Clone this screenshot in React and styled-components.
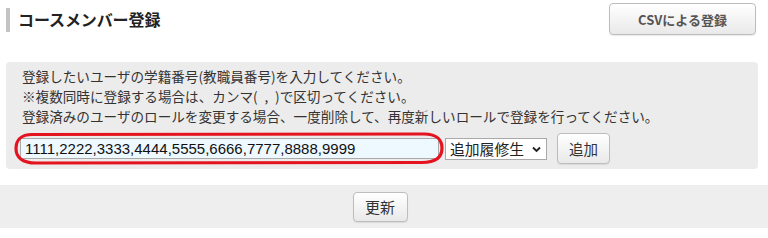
import React from "react";
import styled, { createGlobalStyle } from "styled-components";

const Global = createGlobalStyle`
  html, body { margin: 0; padding: 0; background: #fff; }
  body {
    font-family: "Noto Sans CJK JP", "Noto Sans", sans-serif;
    color: #333;
  }
`;

const Page = styled.div`
  width: 768px;
  height: 238px;
  overflow: hidden;
`;

const Header = styled.div`
  display: flex;
  justify-content: space-between;
  align-items: flex-start;
  padding: 3px 12px 0 6px;
  height: 59px;
  box-sizing: border-box;
`;

const Title = styled.h2`
  margin: 5px 0 0;
  border-left: 4px solid #c3c3c3;
  padding-left: 8px;
  height: 24px;
  line-height: 23px;
  font-size: 16px;
  font-weight: 700;
  color: #222;
  letter-spacing: -0.1px;
`;

const Button = styled.button`
  font-family: "Noto Sans CJK JP", "Noto Sans", sans-serif;
  background: linear-gradient(#ffffff, #e9e9e9);
  border: 1px solid #bdbdbd;
  border-radius: 4px;
  box-shadow: 0 1px 1px rgba(0, 0, 0, 0.08);
  color: ${(p) => (p.$muted ? "#555" : "#333")};
  font-size: ${(p) => p.$size || 14}px;
  font-weight: ${(p) => (p.$bold ? 700 : 400)};
  width: ${(p) => p.$w}px;
  height: ${(p) => p.$h}px;
  padding: 0;
  cursor: pointer;
`;

const Panel = styled.div`
  margin: 3px 10px 0 6px;
  background: #ececec;
  border-radius: 4px;
  padding: 4px 16px 0 16px;
  height: 107px;
  box-sizing: border-box;
`;

const Line = styled.p`
  margin: 0;
  font-size: 13.6px;
  line-height: 20px;
  color: #333;
  white-space: nowrap;
`;

const FormRow = styled.div`
  display: flex;
  align-items: center;
  margin-top: 7px;
  margin-left: -2px;
`;

const InputWrap = styled.div`
  position: relative;
  display: flex;
`;

const TextInput = styled.input`
  width: 419px;
  height: 21px;
  box-sizing: border-box;
  border: 1px solid #a9a9a9;
  background: #eef8ff;
  padding: 0 4px;
  font-family: "Liberation Sans", Arial, sans-serif;
  font-size: 15px;
  color: #111;
  outline: none;
`;

const Annotation = styled.svg`
  position: absolute;
  left: -6px;
  top: -6px;
  width: 431px;
  height: 33px;
  pointer-events: none;
  overflow: visible;
`;

const SelectWrap = styled.div`
  position: relative;
  margin-left: 6px;
  display: flex;
`;

const Select = styled.select`
  appearance: none;
  width: 102px;
  height: 22px;
  box-sizing: border-box;
  border: 1px solid #a9a9a9;
  background: #fff;
  padding: 0 0 0 4px;
  font-family: "Noto Sans CJK JP", sans-serif;
  font-size: 14.8px;
  line-height: 20px;
  color: #222;
  outline: none;
`;

const Chevron = styled.svg`
  position: absolute;
  right: 6px;
  top: 8px;
  width: 9px;
  height: 7px;
  pointer-events: none;
`;

const AddButton = styled(Button)`
  margin-left: 10px;
`;

const Footer = styled.div`
  margin-top: 16px;
  background: #eeeeee;
  height: 43px;
  display: flex;
  justify-content: center;
  align-items: center;
  padding-right: 8px;
  box-sizing: border-box;
`;

export default function App() {
  return (
    <Page>
      <Global />
      <Header>
        <Title>コースメンバー登録</Title>
        <Button $w={147} $h={32} $size={13} $bold $muted>
          CSVによる登録
        </Button>
      </Header>
      <Panel>
        <Line>登録したいユーザの学籍番号(教職員番号)を入力してください。</Line>
        <Line>※複数同時に登録する場合は、カンマ(&#8194;,&#8194;)で区切ってください。</Line>
        <Line>
          登録済みのユーザのロールを変更する場合、一度削除して、再度新しいロールで登録を行ってください。
        </Line>
        <FormRow>
          <InputWrap>
            <TextInput defaultValue="1111,2222,3333,4444,5555,6666,7777,8888,9999" />
            <Annotation viewBox="0 0 431 33">
              <path
                d="M18 2.5 L410 2 C424 2 428 9 428 16 C428 25 422 30.5 408 30.5 L22 31 C8 31 2 25 2 16.5 C2 8 7 2.5 18 2.5 Z"
                fill="none"
                stroke="#e3141f"
                strokeWidth="3.2"
              />
            </Annotation>
          </InputWrap>
          <SelectWrap>
            <Select defaultValue="a">
              <option value="a">追加履修生</option>
            </Select>
            <Chevron viewBox="0 0 9 7">
              <path d="M1 1.5 L4.5 5 L8 1.5" fill="none" stroke="#222" strokeWidth="1.9" />
            </Chevron>
          </SelectWrap>
          <AddButton $w={53} $h={31} $size={14.5}>
            追加
          </AddButton>
        </FormRow>
      </Panel>
      <Footer>
        <Button $w={55} $h={30} $size={15}>
          更新
        </Button>
      </Footer>
    </Page>
  );
}
